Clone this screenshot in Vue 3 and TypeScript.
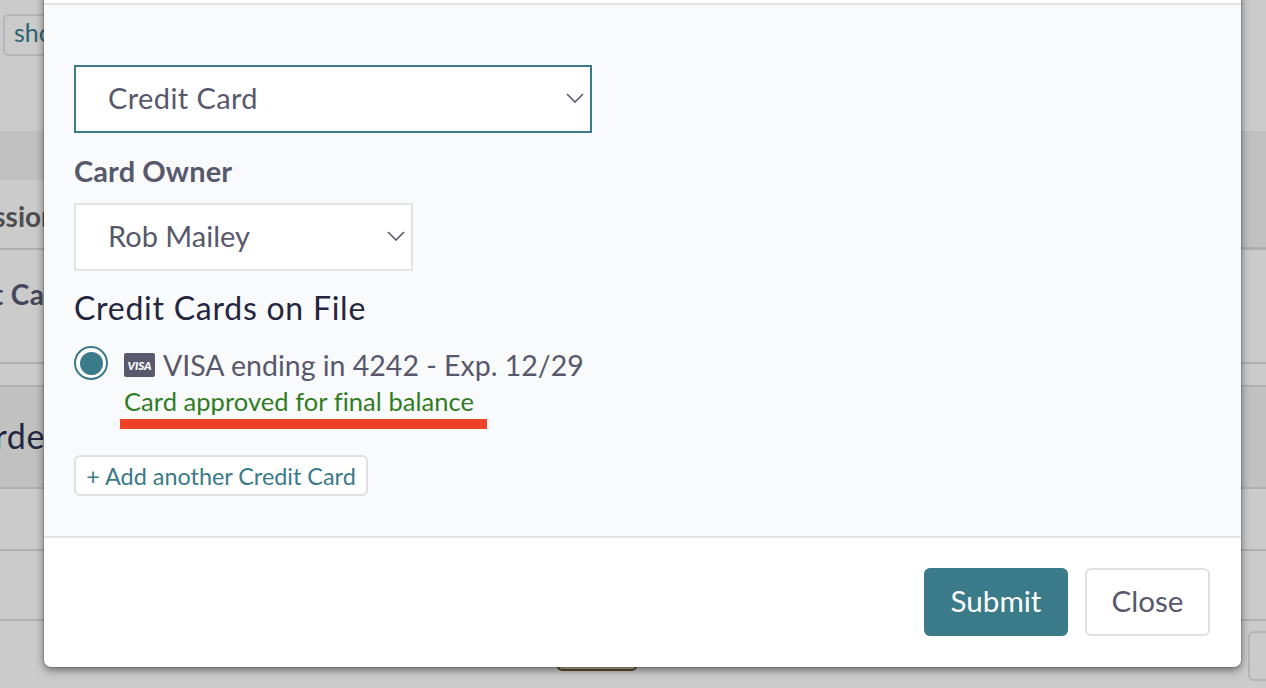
<script setup lang="ts">
const cardLabel: string = 'VISA ending in 4242 - Exp. 12/29'
</script>

<template>
  <div class="page">
    <div class="backdrop">
      <div class="toolbar"><span class="chip">show</span></div>
      <div class="band"></div>
      <div class="row row-session">
        <span class="cell-text session">Session</span>
        <span class="session-end"></span>
      </div>
      <div class="row row-card"><span class="cell-text card">st Card</span></div>
      <div class="row row-gap"></div>
      <div class="row row-order"><span class="cell-text order">Order</span></div>
      <div class="row row-a"></div>
      <div class="row row-b"></div>
      <div class="row-last">
        <span class="gold"></span>
        <span class="corner"></span>
      </div>
    </div>

    <section class="modal">
      <div class="modal-body">
        <div class="select select-focus">
          <span>Credit Card</span>
          <svg class="caret" viewBox="0 0 18 10" width="18" height="10"><path d="M1 1l8 8 8-8" /></svg>
        </div>
        <h4 class="label">Card Owner</h4>
        <div class="select select-owner">
          <span>Rob Mailey</span>
          <svg class="caret" viewBox="0 0 18 10" width="18" height="10"><path d="M1 1l8 8 8-8" /></svg>
        </div>
        <h3 class="heading">Credit Cards on File</h3>
        <div class="card-option">
          <span class="radio"><span class="radio-dot"></span></span>
          <div class="card-info">
            <div class="card-line">
              <svg class="visa" viewBox="0 0 31 24" width="31" height="24">
                <rect width="31" height="24" rx="2" fill="#5a5a6e" />
                <text x="15.5" y="16.5" text-anchor="middle" class="visa-text">VISA</text>
              </svg>
              <span>{{ cardLabel }}</span>
            </div>
            <div class="approved">Card approved for final balance</div>
          </div>
          <span class="annotation"></span>
        </div>
        <button class="add-btn" type="button">+ Add another Credit Card</button>
      </div>
      <footer class="modal-footer">
        <button class="btn btn-primary" type="button">Submit</button>
        <button class="btn btn-default" type="button">Close</button>
      </footer>
    </section>
  </div>
</template>

<style>
html, body { margin: 0; padding: 0; background: #cbcbcb; }
</style>

<style scoped>
.page {
  position: relative;
  width: 1266px;
  height: 688px;
  overflow: hidden;
  background: #cbcbcb;
  font-family: Lato, "Open Sans", sans-serif;
  color: #58586c;
}
.backdrop { display: flex; flex-direction: column; height: 688px; }
.toolbar { height: 131px; padding: 14px 0 0 3px; box-sizing: border-box; }
.chip {
  display: block;
  width: 90px;
  height: 42px;
  box-sizing: border-box;
  border: 2px solid #b5b5b8;
  border-radius: 6px;
  padding: 1px 9px;
  font-size: 25px;
  color: #2e6470;
}
.band { height: 49px; background: #c0c0c0; }
.row { border-bottom: 2px solid #b0b0b2; box-sizing: border-box; overflow: hidden; white-space: nowrap; }
.row-session { position: relative; height: 70px; padding-top: 19px; }
.session-end {
  position: absolute;
  right: 0;
  top: 0;
  width: 60px;
  height: 71px;
  background: #c0c0c0;
  border-bottom: 4px solid #b0b0b2;
  box-sizing: border-box;
}
.row-card { height: 114px; padding-top: 27px; }
.row-gap { height: 23px; }
.row-order { height: 102px; background: #c1c1c1; padding-top: 28px; }
.row-a { height: 62px; }
.row-b { height: 70px; }
.cell-text { display: block; font-weight: 700; font-size: 28px; }
.session { margin-left: -37px; color: #4d4d50; }
.card { margin-left: -20px; letter-spacing: 0.4px; color: #46475a; }
.order { margin-left: -33px; font-weight: 400; font-size: 34px; letter-spacing: 0.6px; color: #24263f; }
.row-last { position: relative; flex: 1; }
.gold {
  position: absolute;
  left: 557px;
  top: 30px;
  width: 80px;
  height: 20px;
  box-sizing: border-box;
  border: 2px solid #5e4e28;
  border-radius: 5px;
  background: #bdb8a0;
}
.corner {
  position: absolute;
  left: 1248px;
  top: 10px;
  width: 60px;
  height: 50px;
  box-sizing: border-box;
  border: 2px solid #b5b5b8;
  border-radius: 6px;
}
.modal {
  position: absolute;
  left: 44px;
  top: -60px;
  width: 1197px;
  height: 727px;
  display: flex;
  flex-direction: column;
  background: #fff;
  border-radius: 7px;
  box-shadow: 0 0 0 1px rgba(0, 0, 0, 0.12), 0 3px 9px rgba(0, 0, 0, 0.5);
  overflow: hidden;
}
.modal-body {
  margin-top: 63px;
  flex: 1;
  background: #f9fafc;
  border-top: 2px solid #e4e4e6;
  border-bottom: 2px solid #e4e4e6;
  padding: 60px 30px 0;
  display: flex;
  flex-direction: column;
  align-items: flex-start;
}
.select {
  position: relative;
  display: flex;
  align-items: center;
  height: 68px;
  box-sizing: border-box;
  background: #fff;
  padding: 0 0 3px 32px;
  font-size: 29px;
  color: #58586c;
}
.select-focus { width: 518px; border: 2px solid #3a7a89; letter-spacing: 0.4px; }
.select-owner { width: 339px; border: 2px solid #e4e4e6; }
.caret {
  position: absolute;
  right: 6px;
  top: 26px;
  fill: none;
  stroke: #58586c;
  stroke-width: 1.6;
}
.label { margin: 21px 0 15px; font-size: 29px; line-height: 34px; font-weight: 700; letter-spacing: 0.1px; color: #58586c; }
.heading { margin: 19px 0 20px; font-size: 32px; line-height: 36px; font-weight: 400; letter-spacing: 0.75px; color: #24263f; }
.card-option { position: relative; display: flex; align-items: flex-start; gap: 15px; }
.radio {
  width: 34px;
  height: 34px;
  margin-right: 1px;
  box-sizing: border-box;
  border: 2px solid #3a7a89;
  border-radius: 50%;
  background: #fff;
  display: flex;
  align-items: center;
  justify-content: center;
}
.radio-dot { width: 23px; height: 23px; border-radius: 50%; background: #3a7a89; }
.card-info { margin-top: 1px; }
.card-line { display: flex; align-items: center; gap: 8px; height: 36px; font-size: 28.5px; color: #58586c; white-space: nowrap; }
.visa-text { font: italic 900 11.5px Lato, sans-serif; fill: #fff; }
.approved { font-size: 25.5px; line-height: 32px; margin-top: 2px; letter-spacing: 0.05px; color: #2f7d1f; white-space: nowrap; }
.annotation {
  position: absolute;
  left: 46px;
  top: 73px;
  width: 367px;
  height: 10px;
  background: #ee4126;
}
.add-btn {
  margin-top: 38px;
  height: 41px;
  width: 294px;
  box-sizing: border-box;
  padding: 0;
  background: #fff;
  border: 2px solid #dfdfe5;
  border-radius: 6px;
  font: 400 23.4px Lato, sans-serif;
  color: #3a7a89;
}
.modal-footer {
  height: 129px;
  box-sizing: border-box;
  display: flex;
  justify-content: flex-end;
  gap: 17px;
  padding: 30px 31px 0 0;
}
.btn {
  height: 68px;
  box-sizing: border-box;
  border-radius: 6px;
  font: 400 29.6px Lato, sans-serif;
  padding: 0 0 4px;
}
.btn-primary { width: 144px; background: #3a7a89; border: none; color: #fff; }
.btn-default { width: 125px; background: #fff; border: 2px solid #dfdfe5; color: #58586c; }
</style>
